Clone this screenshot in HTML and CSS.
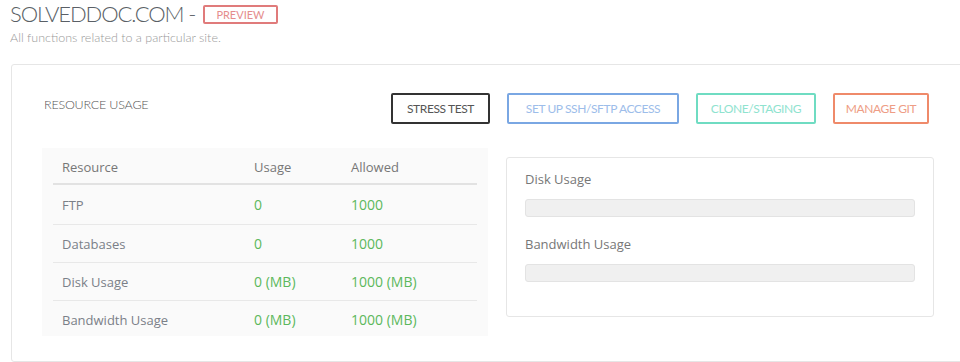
FILE: index.html
```html
<!DOCTYPE html>
<html lang="en">
<head>
    <meta charset="UTF-8">
    <title>solveddoc.com</title>
    <link rel="stylesheet" href="styles.css">
</head>
<body>
    <!-- Site header -->
    <div class="site-head">
        <h1 class="site-title">SOLVEDDOC.COM - <span class="badge">PREVIEW</span></h1>
        <p class="site-sub">All functions related to a particular site.</p>
    </div>

    <!-- Resource card -->
    <div class="card">
        <div class="card-top">
            <h2 class="card-title">RESOURCE USAGE</h2>
            <div class="actions">
                <button class="btn btn-dark">STRESS TEST</button>
                <button class="btn btn-blue">SET UP SSH/SFTP ACCESS</button>
                <button class="btn btn-teal">CLONE/STAGING</button>
                <button class="btn btn-orange">MANAGE GIT</button>
            </div>
        </div>

        <div class="card-body">
            <div class="table-wrap">
                <table class="usage">
                    <thead>
                        <tr><th>Resource</th><th>Usage</th><th>Allowed</th></tr>
                    </thead>
                    <tbody>
                        <tr><td>FTP</td><td class="num">0</td><td class="num">1000</td></tr>
                        <tr><td>Databases</td><td class="num">0</td><td class="num">1000</td></tr>
                        <tr><td>Disk Usage</td><td class="num">0 (MB)</td><td class="num">1000 (MB)</td></tr>
                        <tr><td>Bandwidth Usage</td><td class="num">0 (MB)</td><td class="num">1000 (MB)</td></tr>
                    </tbody>
                </table>
            </div>

            <div class="bars">
                <div class="bar-label">Disk Usage</div>
                <div class="bar"><div class="bar-fill" style="width: 0%"></div></div>
                <div class="bar-label">Bandwidth Usage</div>
                <div class="bar"><div class="bar-fill" style="width: 0%"></div></div>
            </div>
        </div>
    </div>
</body>
</html>
```

FILE: styles.css
```css
/* General */
body {
    margin: 0;
    background: #fff;
    font-family: 'Open Sans', sans-serif;
    color: #777;
    overflow: hidden;
}

/* Header */
.site-head {
    padding: 2px 10px 0 10px;
}

.site-title {
    margin: 0;
    font-family: 'Lato', sans-serif;
    font-weight: 300;
    font-size: 22px;
    line-height: 24px;
    color: #5a5f66;
    letter-spacing: -1.1px;
    display: flex;
    align-items: center;
}

.badge {
    display: inline-block;
    margin-left: 8px;
    border: 2px solid #e07b7b;
    border-radius: 2px;
    color: #e58d8d;
    font-size: 11px;
    font-weight: 400;
    line-height: 15px;
    padding: 0 11px;
    letter-spacing: 0;
}

.site-sub {
    margin: 4px 0 0 0;
    font-family: 'Lato', sans-serif;
    font-weight: 300;
    font-size: 12.5px;
    color: #9a9a9a;
}

/* Card */
.card {
    margin: 19px -20px 0 11px;
    height: 298px;
    border: 1px solid #e6e6e6;
    border-radius: 3px;
    box-sizing: border-box;
    padding: 28px 40px 0 30px;
}

.card-top {
    display: flex;
    justify-content: space-between;
    align-items: flex-start;
    padding-right: 10px;
}

.card-title {
    margin: 0;
    padding: 4px 0 0 2px;
    font-family: 'Lato', sans-serif;
    font-weight: 300;
    font-size: 12.5px;
    color: #555;
    letter-spacing: -0.2px;
}

.actions {
    display: flex;
    gap: 17px;
}

.btn {
    background: #fff;
    font-family: 'Lato', sans-serif;
    font-size: 12px;
    height: 31px;
    padding: 0 8px;
    border: 2px solid;
    border-radius: 2px;
    letter-spacing: -0.4px;
    cursor: pointer;
}

.btn-dark {
    border-color: #333;
    color: #555;
    width: 99px;
}

.btn-blue {
    border-color: #7aa7e3;
    color: #9dbdea;
    width: 172px;
}

.btn-teal {
    border-color: #6fdcc2;
    color: #8fe3cf;
    width: 120px;
}

.btn-orange {
    border-color: #ef8a6a;
    color: #ee9d85;
    width: 96px;
}

/* Body */
.card-body {
    display: flex;
    gap: 18px;
    margin-top: 24px;
}

.table-wrap {
    flex-shrink: 0;
    width: 446px;
    height: 188px;
    background: #fafafa;
    padding: 2px 11px 0 11px;
    box-sizing: border-box;
}

.usage {
    width: 100%;
    border-collapse: collapse;
    font-size: 13px;
}

.usage th {
    text-align: left;
    font-weight: 400;
    color: #777;
    height: 33px;
    padding: 0 9px;
    border-bottom: 2px solid #e2e2e2;
}

.usage td {
    height: 37px;
    padding: 0 9px;
    color: #7b8088;
    border-top: 1px solid #e8e8e8;
}

.usage tbody tr:first-child td {
    height: 39px;
    border-top: none;
}

.usage th:nth-child(1) { width: 174px; }
.usage th:nth-child(2) { width: 79px; }

.usage td.num {
    color: #5cb85c;
    font-size: 14px;
}

/* Progress bars */
.bars {
    flex-shrink: 0;
    margin-top: 9px;
    width: 428px;
    height: 160px;
    border: 1px solid #e6e6e6;
    border-radius: 3px;
    box-sizing: border-box;
    padding: 11px 18px 0 18px;
}

.bar-label {
    font-size: 13px;
    color: #777;
    line-height: 20px;
}

.bar {
    margin: 10px 0 17px 0;
    height: 18px;
    background: #f0f0f0;
    border: 1px solid #e3e3e3;
    border-radius: 3px;
    box-sizing: border-box;
    overflow: hidden;
}

.bar-fill {
    height: 100%;
    background: #5cb85c;
}
```
